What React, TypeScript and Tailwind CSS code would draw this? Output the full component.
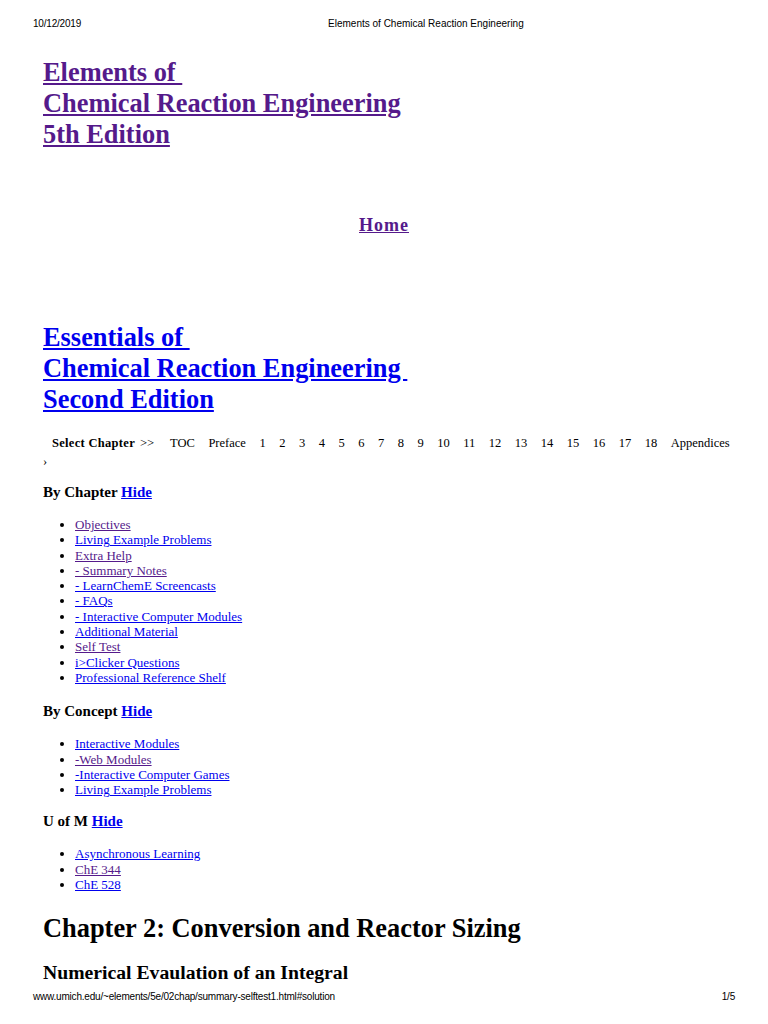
const PURPLE = 'text-[#551a8b]'
const BLUE = 'text-[#0000ee]'

type Item = { label: string; visited?: boolean }

const BY_CHAPTER: Item[] = [
  { label: 'Objectives', visited: true },
  { label: 'Living Example Problems' },
  { label: 'Extra Help', visited: true },
  { label: '- Summary Notes', visited: true },
  { label: '- LearnChemE Screencasts' },
  { label: '- FAQs' },
  { label: '- Interactive Computer Modules' },
  { label: 'Additional Material' },
  { label: 'Self Test', visited: true },
  { label: 'i>Clicker Questions' },
  { label: 'Professional Reference Shelf' },
]

const BY_CONCEPT: Item[] = [
  { label: 'Interactive Modules' },
  { label: '-Web Modules', visited: true },
  { label: '-Interactive Computer Games' },
  { label: 'Living Example Problems' },
]

const U_OF_M: Item[] = [
  { label: 'Asynchronous Learning' },
  { label: 'ChE 344', visited: true },
  { label: 'ChE 528' },
]

const CHAPTERS = ['TOC', 'Preface', '1', '2', '3', '4', '5', '6', '7', '8', '9', '10', '11', '12', '13', '14', '15', '16', '17', '18', 'Appendices']

function LinkList({ items, className }: { items: Item[]; className: string }) {
  return (
    <ul className={`list-disc pl-[32px] text-[13px] leading-[15.3px] ${className}`}>
      {items.map((it, i) => (
        <li key={i}>
          <a href="#" className={`underline ${it.visited ? PURPLE : BLUE}`}>{it.label}</a>
        </li>
      ))}
    </ul>
  )
}

export default function App() {
  return (
    <div className="w-[768px] h-[1024px] bg-white text-black font-['Liberation_Serif','Times_New_Roman',serif] overflow-hidden">
      {/* print header */}
      <div className="flex px-[33px] pt-[18px] text-[10px] leading-[12px] font-['Liberation_Sans',Arial,sans-serif] tracking-[-0.2px]">
        <span>10/12/2019</span>
        <span className="ml-[247px] tracking-[0px]">Elements of Chemical Reaction Engineering</span>
      </div>

      <div className="px-[43px]">
        <h1 className={`mt-[27px] text-[26.4px] leading-[31px] font-bold ${PURPLE}`}>
          <a href="#" className="underline">Elements of&nbsp;<br />Chemical Reaction Engineering<br />5th Edition</a>
        </h1>

        <div className="mt-[64px] text-center text-[18px] leading-[22px] font-bold tracking-[1px]">
          <a href="#" className={`underline ${PURPLE}`}>Home</a>
        </div>

        <h1 className={`mt-[86px] text-[26.4px] leading-[31px] font-bold ${BLUE}`}>
          <a href="#" className="underline">Essentials of&nbsp;<br />Chemical Reaction Engineering&nbsp;<br />Second Edition</a>
        </h1>

        <p className="mt-[19px] text-[12.5px] leading-[18px]">
          <span className="whitespace-nowrap">
            <b className="ml-[9px] tracking-[0.3px]">Select Chapter</b>
            <span className="ml-[5px] mr-[16px]">&gt;&gt;</span>
            {CHAPTERS.map((c, i) => (
              <span key={c} className={i < CHAPTERS.length - 1 ? 'mr-[13.5px]' : ''}>{c}</span>
            ))}
          </span>
          <br />
          <span>›</span>
        </p>

        <h3 className="mt-[13px] text-[15px] leading-[18px] font-bold">
          By Chapter <a href="#" className={`underline ${BLUE}`}>Hide</a>
        </h3>
        <LinkList items={BY_CHAPTER} className="mt-[16px]" />

        <h3 className="mt-[17px] text-[15px] leading-[18px] font-bold">
          By Concept <a href="#" className={`underline ${BLUE}`}>Hide</a>
        </h3>
        <LinkList items={BY_CONCEPT} className="mt-[16px]" />

        <h3 className="mt-[14.5px] text-[15px] leading-[18px] font-bold">
          U of M <a href="#" className={`underline ${BLUE}`}>Hide</a>
        </h3>
        <LinkList items={U_OF_M} className="mt-[16.4px]" />

        <h2 className="mt-[20px] text-[26.4px] leading-[32px] font-bold">Chapter 2: Conversion and Reactor Sizing</h2>
        <h3 className="mt-[16px] text-[19.7px] leading-[24px] font-bold">Numerical Evaulation of an Integral</h3>
      </div>

      {/* print footer */}
      <div className="flex justify-between px-[33px] mt-[7px] text-[10px] leading-[12px] font-['Liberation_Sans',Arial,sans-serif] tracking-[-0.2px]">
        <span>www.umich.edu/~elements/5e/02chap/summary-selftest1.html#solution</span>
        <span>1/5</span>
      </div>
    </div>
  )
}
